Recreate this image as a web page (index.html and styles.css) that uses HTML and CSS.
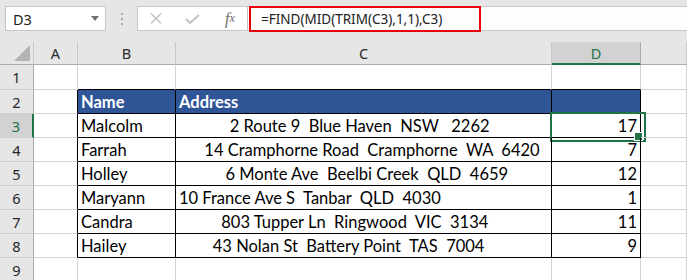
FILE: index.html
```html
<!DOCTYPE html>
<html lang="en">

<head>
    <meta charset="UTF-8">
    <title>FIND MID TRIM</title>
    <link rel="stylesheet" href="styles.css">
</head>

<body>
    <div class="topbar">
        <div class="namebox">
            <span>D3</span>
            <span class="caret"></span>
        </div>
        <div class="grip"><i></i><i></i><i></i></div>
        <div class="fxtools">
            <span class="tool">
                <svg width="12" height="11" viewBox="0 0 12 11"><path d="M1 0.5L11 10.5M11 0.5L1 10.5" stroke="#c2c2c2" stroke-width="1.4" fill="none"/></svg>
            </span>
            <span class="tool">
                <svg width="15" height="10" viewBox="0 0 15 10"><path d="M1 5L5 9L14 1" stroke="#c2c2c2" stroke-width="2" fill="none"/></svg>
            </span>
            <span class="tool fx">f<small>x</small></span>
        </div>
        <div class="formula">
            <span class="mark"></span>
            <span class="ftext">=FIND(MID(TRIM(C3),1,1),C3)</span>
        </div>
    </div>

    <div class="sheet">
        <!-- column headers -->
        <div class="ch corner"><span class="tri"></span></div>
        <div class="ch">A</div>
        <div class="ch">B</div>
        <div class="ch">C</div>
        <div class="ch on">D</div>
        <div class="ch"></div>

        <!-- row 1 -->
        <div class="rh">1</div>
        <div class="c"></div>
        <div class="c tt"></div>
        <div class="c tt"></div>
        <div class="c tt"></div>
        <div class="c"></div>

        <!-- row 2 -->
        <div class="rh">2</div>
        <div class="c tl"></div>
        <div class="c tb head">Name</div>
        <div class="c tb head">Address</div>
        <div class="c tb head"></div>
        <div class="c"></div>

        <!-- row 3 -->
        <div class="rh on">3</div>
        <div class="c tl"></div>
        <div class="c tb">Malcolm</div>
        <div class="c tb">            2 Route 9  Blue Haven  NSW   2262</div>
        <div class="c tb num sel">17</div>
        <div class="c"></div>

        <!-- row 4 -->
        <div class="rh">4</div>
        <div class="c tl"></div>
        <div class="c tb">Farrah</div>
        <div class="c tb">      14 Cramphorne Road  Cramphorne  WA  6420</div>
        <div class="c tb num">7</div>
        <div class="c"></div>

        <!-- row 5 -->
        <div class="rh">5</div>
        <div class="c tl"></div>
        <div class="c tb">Holley</div>
        <div class="c tb">           6 Monte Ave  Beelbi Creek  QLD  4659</div>
        <div class="c tb num">12</div>
        <div class="c"></div>

        <!-- row 6 -->
        <div class="rh">6</div>
        <div class="c tl"></div>
        <div class="c tb">Maryann</div>
        <div class="c tb">10 France Ave S  Tanbar  QLD  4030</div>
        <div class="c tb num">1</div>
        <div class="c"></div>

        <!-- row 7 -->
        <div class="rh">7</div>
        <div class="c tl"></div>
        <div class="c tb">Candra</div>
        <div class="c tb">          803 Tupper Ln  Ringwood  VIC  3134</div>
        <div class="c tb num">11</div>
        <div class="c"></div>

        <!-- row 8 -->
        <div class="rh">8</div>
        <div class="c tl"></div>
        <div class="c tb">Hailey</div>
        <div class="c tb">        43 Nolan St  Battery Point  TAS  7004</div>
        <div class="c tb num">9</div>
        <div class="c"></div>

        <!-- row 9 -->
        <div class="rh">9</div>
        <div class="c"></div>
        <div class="c"></div>
        <div class="c"></div>
        <div class="c"></div>
        <div class="c"></div>
    </div>
</body>

</html>
```

FILE: styles.css
```css
* {
    margin: 0;
    padding: 0;
    box-sizing: border-box;
}

body {
    width: 687px;
    height: 280px;
    overflow: hidden;
    background: #fff;
    font-family: "Noto Sans", "Open Sans", sans-serif;
    color: #000;
}

/* formula bar */
.topbar {
    height: 42px;
    background: #e6e6e6;
    display: flex;
    align-items: flex-start;
    padding-top: 6px;
    padding-left: 5px;
}

.namebox {
    width: 101px;
    height: 25px;
    background: #fff;
    border: 1px solid #c6c6c6;
    display: flex;
    align-items: center;
    justify-content: space-between;
    padding: 0 6px 0 7px;
    font-size: 14.5px;
    color: #222;
}

.caret {
    border-left: 4px solid transparent;
    border-right: 4px solid transparent;
    border-top: 5px solid #727272;
}

.grip {
    width: 31px;
    display: flex;
    flex-direction: column;
    align-items: center;
    gap: 3px;
    padding-top: 7px;
}

.grip i {
    width: 2px;
    height: 2px;
    background: #a6a6a6;
}

.fxtools {
    width: 111px;
    height: 25px;
    background: #fff;
    border: 1px solid #c6c6c6;
    display: flex;
    align-items: center;
}

.tool {
    width: 37px;
    display: flex;
    justify-content: center;
    align-items: center;
}

.fx {
    font-family: "Liberation Serif", serif;
    font-style: italic;
    font-size: 16px;
    color: #6a6a6a;
    padding-left: 2px;
}

.fx small {
    font-size: 12px;
}

.formula {
    flex: 1;
    height: 25px;
    background: #fdfdfd;
    border-top: 1px solid #c6c6c6;
    border-bottom: 1px solid #c6c6c6;
    position: relative;
    display: flex;
    align-items: center;
    padding-left: 13px;
}

.mark {
    position: absolute;
    left: 1px;
    top: -1px;
    width: 232px;
    height: 26px;
    border: 2px solid #e8000b;
}

.ftext {
    font-size: 13.5px;
    color: #222;
}

/* sheet grid */
.sheet {
    display: grid;
    grid-template-columns: 34px 44px 98px 376px 89px 1fr;
    grid-template-rows: 23px 25px;
    grid-auto-rows: 24px;
}

.ch,
.rh {
    background: #e6e6e6;
    font-size: 14.5px;
    color: #262626;
    display: flex;
    align-items: center;
    justify-content: center;
}

.ch {
    border-right: 1px solid #c8c8c8;
    border-bottom: 1px solid #ababab;
}

.rh {
    border-right: 1px solid #ababab;
    border-bottom: 1px solid #cfcfcf;
}

.ch.on {
    background: #d2d2d2;
    color: #217346;
    border-bottom: 2px solid #217346;
    border-right-color: #ababab;
}

.rh.on {
    background: #d2d2d2;
    color: #217346;
    border-right: 2px solid #217346;
}

.corner {
    justify-content: flex-end;
    align-items: flex-end;
    padding: 0 3px 3px 0;
}

.tri {
    width: 0;
    height: 0;
    border-left: 16px solid transparent;
    border-bottom: 16px solid #b4b4b4;
}

.c {
    border-right: 1px solid #d4d4d4;
    border-bottom: 1px solid #d4d4d4;
    font-family: Lato, "Liberation Sans", sans-serif;
    font-size: 16.5px;
    line-height: 23px;
    padding: 1px 3px 0;
    white-space: pre;
    position: relative;
}

.tt {
    border-bottom-color: #000;
}

.tl {
    border-right-color: #000;
}

.tb {
    border-right-color: #000;
    border-bottom-color: #000;
}

.head {
    background: #2f5597;
    color: #fff;
    font-weight: bold;
}

.num {
    text-align: right;
}

.sel::before {
    content: "";
    position: absolute;
    left: -2px;
    top: -2px;
    width: 92px;
    height: 26px;
    border: 2px solid #217346;
}

.sel::after {
    content: "";
    position: absolute;
    right: -3px;
    bottom: -4px;
    width: 7px;
    height: 7px;
    background: #217346;
    border: 1px solid #fff;
}
```
